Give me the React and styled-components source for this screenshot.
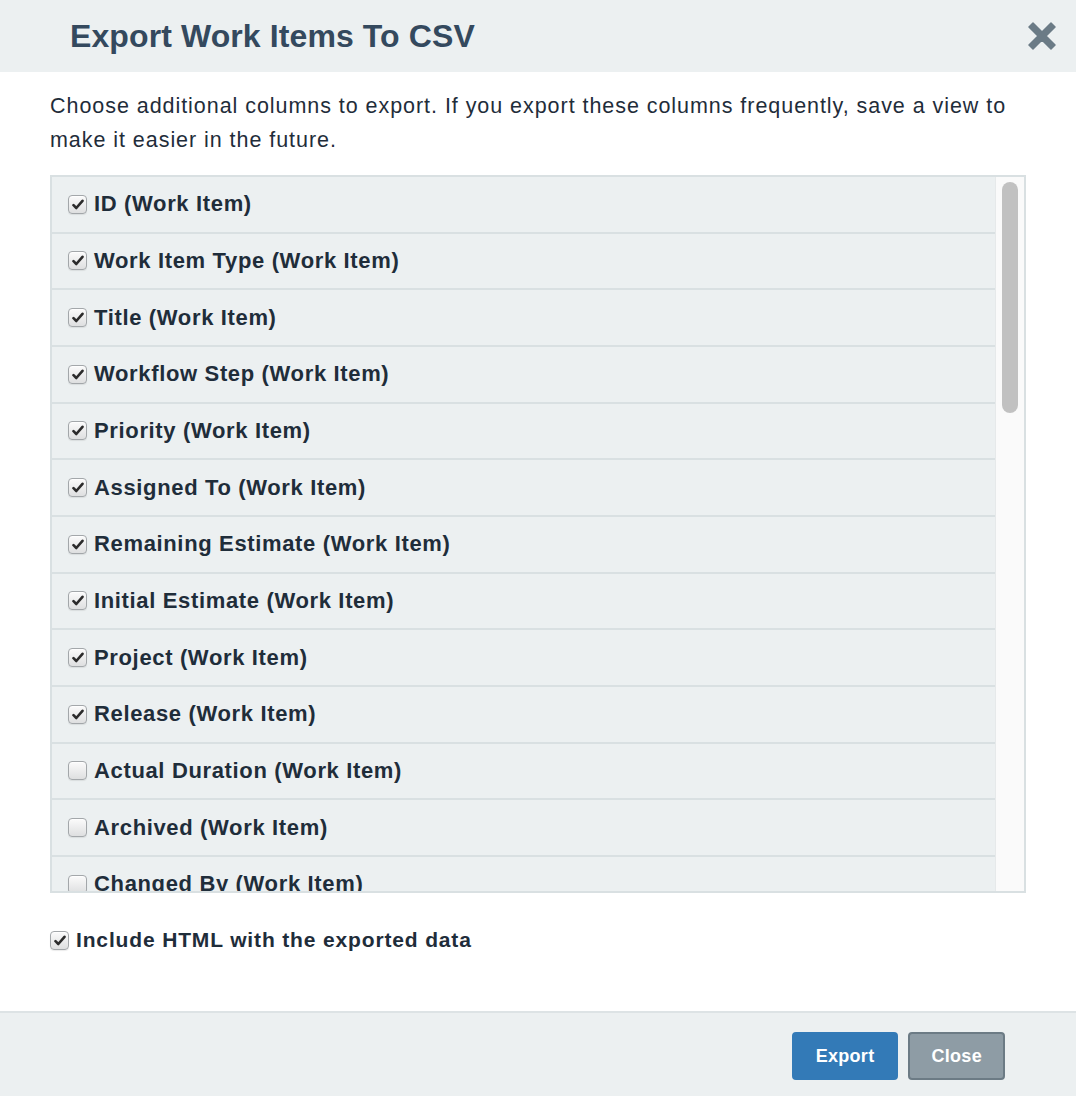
import React, { useState } from "react";
import styled, { createGlobalStyle } from "styled-components";

const GlobalStyle = createGlobalStyle`
  html, body {
    margin: 0;
    padding: 0;
    background: #ffffff;
  }
  body {
    font-family: "Liberation Sans", Arial, sans-serif;
    color: #1f2d3a;
  }
`;

const Modal = styled.div`
  width: 1076px;
  height: 1096px;
  display: flex;
  flex-direction: column;
  overflow: hidden;
`;

const Header = styled.div`
  height: 72px;
  flex: none;
  background: #ecf0f1;
  display: flex;
  align-items: center;
  justify-content: space-between;
  padding: 0 20px 0 70px;
  box-sizing: border-box;
`;

const Title = styled.h1`
  margin: 0;
  font-size: 32px;
  font-weight: bold;
  color: #34495e;
  letter-spacing: 0.1px;
`;

const CloseIcon = styled.button`
  border: 0;
  background: none;
  padding: 0;
  width: 28px;
  height: 28px;
  display: flex;
  cursor: pointer;
`;

const Body = styled.div`
  flex: 1;
  padding: 17px 50px 0 50px;
  background: #ffffff;
`;

const Intro = styled.p`
  margin: 0 0 18px;
  font-size: 21.5px;
  line-height: 34px;
  color: #1f2d3a;
  letter-spacing: 0.95px;
`;

const ListBox = styled.div`
  height: 718px;
  box-sizing: border-box;
  border: 2px solid #d9e0e2;
  display: flex;
`;

const Rows = styled.div`
  flex: 1;
  overflow: hidden;
`;

const Row = styled.label`
  height: 56.67px;
  box-sizing: border-box;
  display: flex;
  align-items: center;
  gap: 7px;
  padding-left: 16px;
  background: #ecf0f1;
  border-bottom: 2px solid #d9e0e2;
  cursor: pointer;
`;

const Label = styled.span`
  font-size: ${(p) => p.$size}px;
  font-weight: bold;
  letter-spacing: ${(p) => p.$spacing}px;
  color: #1f2d3a;
  white-space: nowrap;
`;

const Track = styled.div`
  width: 29px;
  flex: none;
  background: #fafafa;
  border-left: 1px solid #e6e9ea;
  box-sizing: border-box;
  padding: 5px 6px;
`;

const Thumb = styled.div`
  height: 231px;
  border-radius: 8px;
  background: #c1c1c1;
`;

const Option = styled.label`
  display: flex;
  align-items: center;
  gap: 7px;
  margin-top: 35px;
  cursor: pointer;
`;

const Box = styled.span`
  width: 19px;
  height: 19px;
  flex: none;
  box-sizing: border-box;
  border: 1px solid #a3a7aa;
  border-radius: 4px;
  background: linear-gradient(#fbfbfb, #dedfe0);
  box-shadow: inset 0 1px 1px rgba(255, 255, 255, 0.8), 0 1px 1px rgba(0, 0, 0, 0.08);
  display: flex;
  align-items: center;
  justify-content: center;
`;

const Footer = styled.div`
  height: 85px;
  flex: none;
  background: #ecf0f1;
  border-top: 2px solid #dde3e5;
  box-sizing: border-box;
  display: flex;
  justify-content: flex-end;
  align-items: flex-start;
  gap: 10px;
  padding: 19px 71px 0 0;
`;

const Button = styled.button`
  height: 48px;
  box-sizing: border-box;
  padding: 0 ${(p) => p.$pad}px;
  border-radius: 4px;
  font-family: "Liberation Sans", Arial, sans-serif;
  font-size: 18px;
  font-weight: bold;
  color: #ffffff;
  letter-spacing: 0.3px;
  cursor: pointer;
  background: ${(p) => (p.$primary ? "#337ab7" : "#8e9ca5")};
  border: 2px solid ${(p) => (p.$primary ? "#337ab7" : "#6c7b85")};
`;

// only the rows that show in the list window
const columns = [
  ["ID (Work Item)", true],
  ["Work Item Type (Work Item)", true],
  ["Title (Work Item)", true],
  ["Workflow Step (Work Item)", true],
  ["Priority (Work Item)", true],
  ["Assigned To (Work Item)", true],
  ["Remaining Estimate (Work Item)", true],
  ["Initial Estimate (Work Item)", true],
  ["Project (Work Item)", true],
  ["Release (Work Item)", true],
  ["Actual Duration (Work Item)", false],
  ["Archived (Work Item)", false],
  ["Changed By (Work Item)", false],
];

function Check({ checked }) {
  return (
    <Box>
      {checked && (
        <svg width="12" height="11" viewBox="0 0 12 11">
          <path d="M1.5 6.2 L4.3 9 L10.5 1.8" fill="none" stroke="#2b2b2b" strokeWidth="2.6" strokeLinecap="round" strokeLinejoin="round" />
        </svg>
      )}
    </Box>
  );
}

export default function App() {
  const [picked, setPicked] = useState(columns.map((c) => c[1]));
  const [html, setHtml] = useState(true);

  const toggle = (i) => setPicked((p) => p.map((v, j) => (j === i ? !v : v)));

  return (
    <>
      <GlobalStyle />
      <Modal>
        <Header>
          <Title>Export Work Items To CSV</Title>
          <CloseIcon aria-label="Close">
            <svg width="28" height="28" viewBox="0 0 28 28">
              <path d="M5 1 L14 10 L23 1 L27 5 L18 14 L27 23 L23 27 L14 18 L5 27 L1 23 L10 14 L1 5 Z" fill="#6b7b86" stroke="#6b7b86" strokeWidth="1.5" strokeLinejoin="round" />
            </svg>
          </CloseIcon>
        </Header>
        <Body>
          <Intro>
            Choose additional columns to export. If you export these columns frequently, save a view to make it easier in the future.
          </Intro>
          <ListBox>
            <Rows>
              {columns.map(([name], i) => (
                <Row key={name} onClick={() => toggle(i)}>
                  <Check checked={picked[i]} />
                  <Label $size={22} $spacing={0.65}>{name}</Label>
                </Row>
              ))}
            </Rows>
            <Track>
              <Thumb />
            </Track>
          </ListBox>
          <Option onClick={() => setHtml(!html)}>
            <Check checked={html} />
            <Label $size={21} $spacing={0.85}>Include HTML with the exported data</Label>
          </Option>
        </Body>
        <Footer>
          <Button $primary $pad={22}>Export</Button>
          <Button $pad={21}>Close</Button>
        </Footer>
      </Modal>
    </>
  );
}
